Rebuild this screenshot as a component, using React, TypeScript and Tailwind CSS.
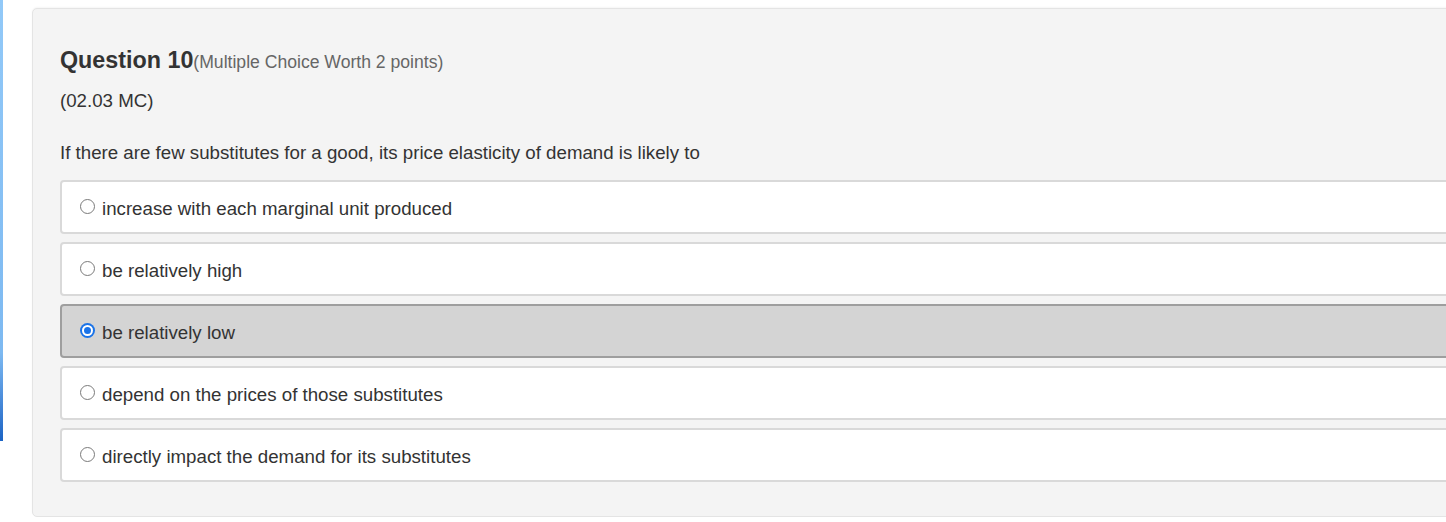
import React, { useState } from 'react';

const OPTIONS = [
  'increase with each marginal unit produced',
  'be relatively high',
  'be relatively low',
  'depend on the prices of those substitutes',
  'directly impact the demand for its substitutes',
];

const Radio: React.FC<{ checked: boolean }> = ({ checked }) =>
  checked ? (
    <span className="flex h-[15px] w-[15px] shrink-0 items-center justify-center rounded-full bg-[#1a73e8]">
      <span className="flex h-[11px] w-[11px] items-center justify-center rounded-full bg-white">
        <span className="block h-[7px] w-[7px] rounded-full bg-[#1a73e8]" />
      </span>
    </span>
  ) : (
    <span className="block h-[15px] w-[15px] shrink-0 rounded-full border border-[#7a7a7a] bg-white" />
  );

export default function App() {
  const [selected, setSelected] = useState(2);

  return (
    <div
      className="flex h-[522px] w-[1446px] overflow-hidden bg-white text-[#333]"
      style={{ fontFamily: '"Liberation Sans", Arial, sans-serif' }}
    >
      <div className="h-[441px] w-[3px] shrink-0 bg-gradient-to-b from-[#92c9f8] via-[#7db9f1] via-80% to-[#1a63c4]" />

      <div className="ml-[29px] mt-[8px] h-[509px] w-[1460px] shrink-0 rounded-[5px] border border-[#e4e4e4] bg-[#f4f4f4] pl-[27px] pt-[37px] shadow-[0_-1px_2px_rgba(0,0,0,0.04)]">
        <h2 className="flex items-baseline leading-[28px]">
          <span className="text-[23.3px] font-bold text-[#333]">Question 10</span>
          <span className="text-[17.6px] text-[#666]">(Multiple Choice Worth 2 points)</span>
        </h2>
        <p className="mt-[12px] text-[18.7px] leading-[26px]">(02.03 MC)</p>
        <p className="mt-[26px] text-[18.7px] leading-[26px]">
          If there are few substitutes for a good, its price elasticity of demand is likely to
        </p>

        <div className="mt-[14px] flex flex-col gap-[8px]">
          {OPTIONS.map((opt, i) => {
            const checked = selected === i;
            return (
              <label
                key={opt}
                onClick={() => setSelected(i)}
                className={`flex h-[54px] cursor-pointer items-center gap-[7px] rounded-[4px] border-2 pl-[18px] ${
                  checked ? 'border-[#9e9e9e] bg-[#d4d4d4]' : 'border-[#d9d9d9] bg-white'
                }`}
              >
                <span className="-mt-[2px] flex">
                  <Radio checked={checked} />
                </span>
                <span className="mt-[4px] text-[18.7px] leading-[26px]">{opt}</span>
              </label>
            );
          })}
        </div>
      </div>
    </div>
  );
}
